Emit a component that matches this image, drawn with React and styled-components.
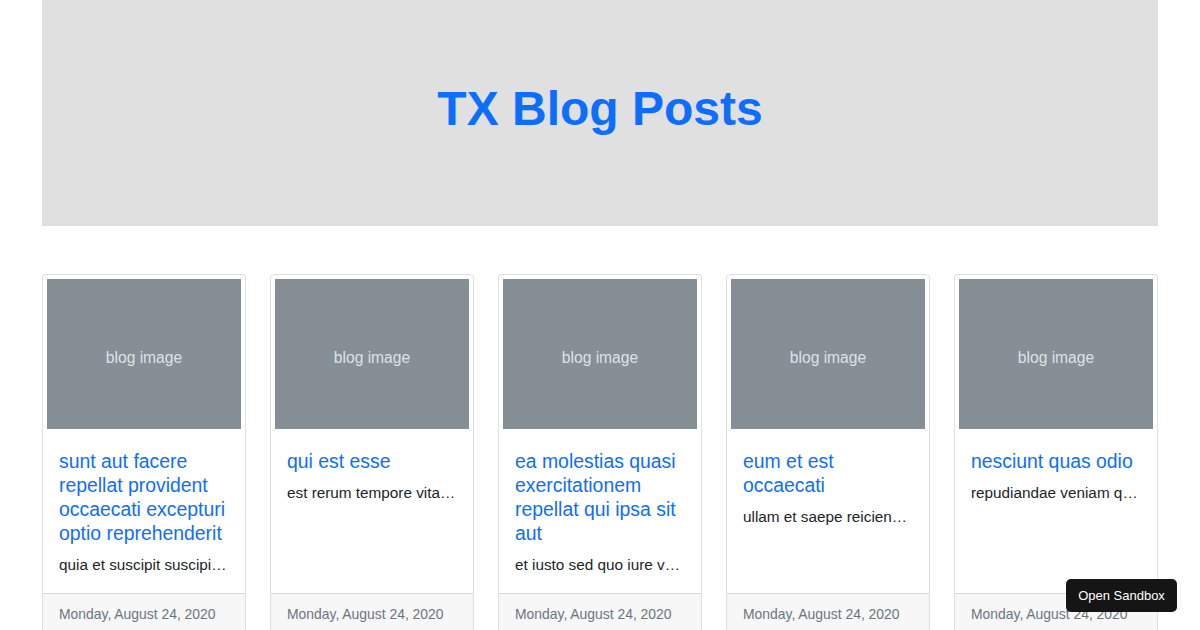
import React from "react";
import styled, { createGlobalStyle } from "styled-components";

const Global = createGlobalStyle`
  * { box-sizing: border-box; }
  body {
    margin: 0;
    font-family: "Liberation Sans", Arial, sans-serif;
    font-size: 16px;
    line-height: 1.5;
    color: #212529;
    background: #fff;
  }
`;

const Container = styled.div`
  width: 1116px;
  margin: 0 auto;
`;

const Jumbotron = styled.header`
  background: #e0e0e0;
  padding: 80px 32px 80px;
  margin-bottom: 48px;
  text-align: center;
`;

const Title = styled.h1`
  margin: 0 0 8px;
  font-size: 48px;
  font-weight: 700;
  line-height: 1.2;
  color: #0d6efd;
`;

const Grid = styled.div`
  display: grid;
  grid-template-columns: repeat(5, 204px);
  gap: 24px;
  align-items: stretch;
`;

const Card = styled.article`
  display: flex;
  flex-direction: column;
  border: 1px solid rgba(0, 0, 0, 0.125);
  border-radius: 4px;
  background: #fff;
  overflow: hidden;
`;

const ImageBox = styled.div`
  margin: 4px 4px 0;
  height: 150px;
  padding-top: 8px;
  background: #868e96;
  color: #dee2e6;
  display: flex;
  align-items: center;
  justify-content: center;
  font-size: 15.6px;
`;

const Body = styled.div`
  flex: 1;
  padding: 20px 16px 16px;
`;

const CardTitle = styled.h5`
  margin: 0 0 8px;
  font-size: 19.4px;
  font-weight: 400;
  line-height: 24px;
  color: #0d6efd;
`;

const Excerpt = styled.p`
  margin: 0;
  font-size: 15.3px;
  line-height: 24px;
  white-space: nowrap;
  overflow: hidden;
  text-overflow: ellipsis;
`;

const Footer = styled.footer`
  padding: 10px 16px 8px;
  background: #f7f7f7;
  border-top: 1px solid rgba(0, 0, 0, 0.125);
  color: #6c757d;
  font-size: 13.9px;
  line-height: 21px;
`;

const SandboxButton = styled.button`
  position: fixed;
  right: 23px;
  bottom: 18px;
  width: 111px;
  height: 33px;
  padding: 0;
  background: #151515;
  color: #fff;
  border: none;
  border-radius: 5px;
  font-family: "Liberation Sans", Arial, sans-serif;
  font-size: 13px;
  cursor: pointer;
`;

const posts = [
  {
    title: "sunt aut facere repellat provident occaecati excepturi optio reprehenderit",
    body: "quia et suscipit suscipit recusandae consequuntur expedita et cum",
  },
  { title: "qui est esse", body: "est rerum tempore vitae sequi sint nihil reprehenderit dolor beatae" },
  {
    title: "ea molestias quasi exercitationem repellat qui ipsa sit aut",
    body: "et iusto sed quo iure voluptatem occaecati omnis eligendi aut ad",
  },
  { title: "eum et est occaecati", body: "ullam et saepe reiciendis voluptatem adipisci sit amet autem" },
  { title: "nesciunt quas odio", body: "repudiandae veniam quaerat sunt sed alias aut fugiat sit autem" },
];

export default function App() {
  return (
    <>
      <Global />
      <Container>
        <Jumbotron>
          <Title>TX Blog Posts</Title>
        </Jumbotron>
        <Grid>
          {posts.map((p, i) => (
            <Card key={i}>
              <ImageBox>blog image</ImageBox>
              <Body>
                <CardTitle>{p.title}</CardTitle>
                <Excerpt>{p.body}</Excerpt>
              </Body>
              <Footer>Monday, August 24, 2020</Footer>
            </Card>
          ))}
        </Grid>
      </Container>
      <SandboxButton>Open Sandbox</SandboxButton>
    </>
  );
}
